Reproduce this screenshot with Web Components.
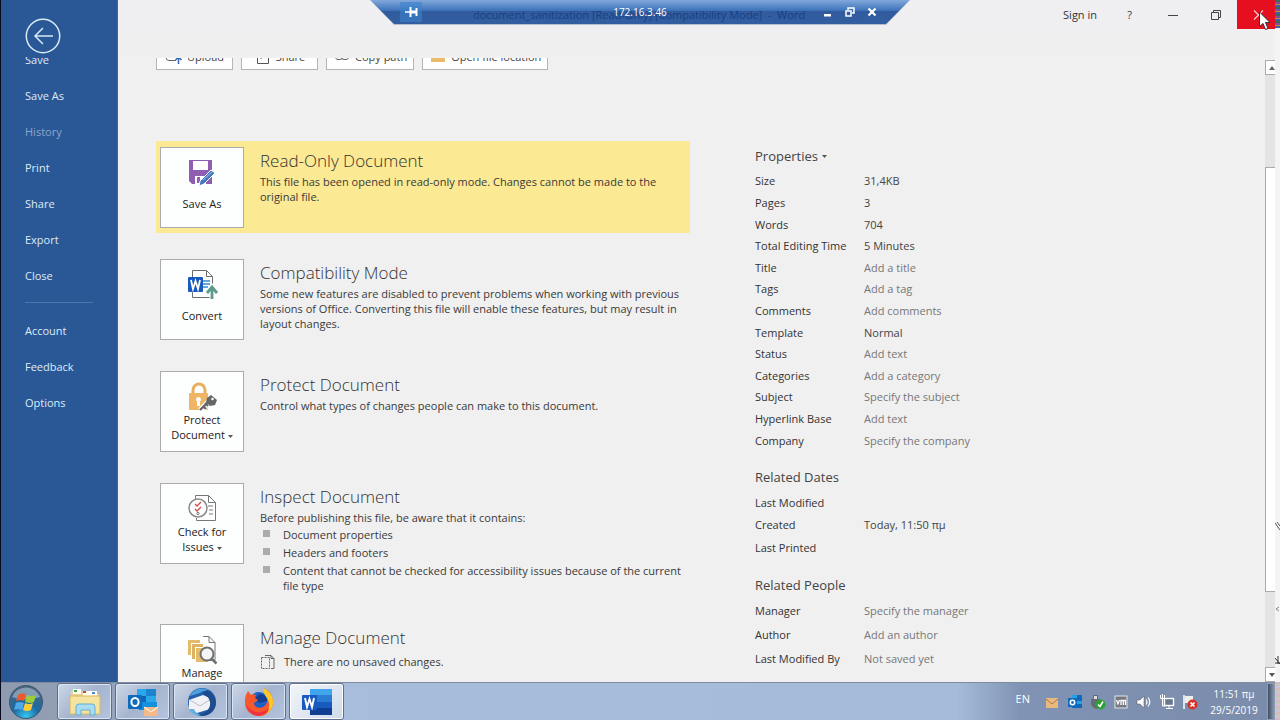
<!DOCTYPE html>
<html lang="en">
<head>
<meta charset="utf-8">
<title>document_sanitization - Word</title>
<style>
html,body{margin:0;height:100%}
body{background:#f0f0f0;color:#333;font:11px/15px "Open Sans","Noto Sans",sans-serif;overflow:hidden}
</style>
</head>
<body>
<app-shell>
  <rdp-bar slot="overlay" address="172.16.3.46"></rdp-bar>
  <backstage-nav slot="nav">
    <nav-item>Save</nav-item>
    <nav-item>Save As</nav-item>
    <nav-item muted>History</nav-item>
    <nav-item>Print</nav-item>
    <nav-item>Share</nav-item>
    <nav-item>Export</nav-item>
    <nav-item>Close</nav-item>
    <nav-item divided>Account</nav-item>
    <nav-item>Feedback</nav-item>
    <nav-item>Options</nav-item>
  </backstage-nav>
  <title-bar slot="title">document_sanitization [Read-Only] [Compatibility Mode]&nbsp; - &nbsp;Word</title-bar>
  <info-page slot="page">
    <path-button slot="actions" icon="upload">Upload</path-button>
    <path-button slot="actions" icon="share">Share</path-button>
    <path-button slot="actions" icon="link">Copy path</path-button>
    <path-button slot="actions" icon="folder">Open file location</path-button>

    <info-card slot="cards" highlight heading="Read-Only Document" icon="save" label="Save As">This file has been opened in read-only mode. Changes cannot be made to the original file.</info-card>
    <info-card slot="cards" heading="Compatibility Mode" icon="convert" label="Convert">Some new features are disabled to prevent problems when working with previous versions of Office. Converting this file will enable these features, but may result in layout changes.</info-card>
    <info-card slot="cards" heading="Protect Document" icon="protect" label="Protect|Document" menu>Control what types of changes people can make to this document.</info-card>
    <info-card slot="cards" heading="Inspect Document" icon="inspect" label="Check for|Issues" menu>Before publishing this file, be aware that it contains:<issue-list items="Document properties|Headers and footers|Content that cannot be checked for accessibility issues because of the current file type"></issue-list></info-card>
    <info-card slot="cards" heading="Manage Document" icon="manage" label="Manage" tall><draft-note>There are no unsaved changes.</draft-note></info-card>

    <prop-group slot="props" heading="Properties" menu rows="Size=31,4KB|Pages=3|Words=704|Total Editing Time=5 Minutes|Title=?Add a title|Tags=?Add a tag|Comments=?Add comments|Template=Normal|Status=?Add text|Categories=?Add a category|Subject=?Specify the subject|Hyperlink Base=?Add text|Company=?Specify the company" style="--rows:281px"></prop-group>
    <prop-group slot="props" heading="Related Dates" rows="Last Modified=|Created=Today, 11:50 πμ|Last Printed=" style="--rows:68px"></prop-group>
    <prop-group slot="props" heading="Related People" rows="Manager=?Specify the manager|Author=?Add an author|Last Modified By=~Not saved yet" style="--rows:71px"></prop-group>
  </info-page>
  <page-scroller slot="scroll"></page-scroller>
  <task-bar slot="tasks">
    <task-button icon="explorer" label="Windows Explorer"></task-button>
    <task-button icon="outlook" label="Outlook"></task-button>
    <task-button icon="thunderbird" label="Thunderbird"></task-button>
    <task-button icon="firefox" label="Firefox"></task-button>
    <task-button icon="word" label="Word" active></task-button>
    <system-tray slot="tray" lang-code="EN" time="11:51 πμ" date="29/5/2019"></system-tray>
  </task-bar>
  <screen-edge slot="edge"></screen-edge>
</app-shell>

<script>
const ICONS = {
  upload:`<svg width="18" height="16" viewBox="0 0 18 16" fill="none" stroke="#666"><path d="M11 12.500H4a3 3 0 0 1 0-6 4.500 4.500 0 0 1 8-1"/><path d="M13.500 16V9m-3 3 3-3 3 3" stroke="#3566b0" stroke-width="1.500"/></svg>`,
  share:`<svg width="18" height="16" viewBox="0 0 18 16" fill="none" stroke="#555"><path d="M7 4.500H3.500v11h11V10"/><path d="M7 11c0-4 2-6 7-6m-3-3 3 3-3 3" stroke="#3566b0"/></svg>`,
  link:`<svg width="18" height="16" viewBox="0 0 18 16" fill="none" stroke="#666"><rect x="2.500" y="6.500" width="7" height="5" rx="2.500"/><rect x="8.500" y="6.500" width="7" height="5" rx="2.500"/></svg>`,
  folder:`<svg width="18" height="16" viewBox="0 0 18 16" fill="#ebbb6c"><path d="M2 3h5l2 2h7v9H2z"/></svg>`,
  save:`<svg width="32" height="30" viewBox="0 0 32 30"><path d="M3 2h23v24H6l-3-3z" fill="#8e5fb0"/><path d="M7 3h15v9H7zM9 18h11v8H9z" fill="#fff"/><path d="M11 19h3v6h-3z" fill="#8e5fb0"/><path d="m14 23 11-11 4 3-11 11-5 2z" fill="#4379c2" stroke="#fff"/><path d="m17 22 9-8" stroke="#9cc0ea"/></svg>`,
  convert:`<svg width="32" height="30" viewBox="0 0 32 30"><path d="M6.500.500h14l6 6v21h-20z" fill="#fff" stroke="#6d6d6d"/><path d="M20.500.500v6h6" fill="none" stroke="#6d6d6d"/><path d="M17 11h7M17 14h7M17 17h5" stroke="#2f8bd0" stroke-width="1.500"/><rect x="2" y="7" width="15" height="15" rx="1" fill="#185abd"/><path d="m5 10 2 9 2.500-8 2.500 8 2-9" fill="none" stroke="#fff" stroke-width="1.800"/><path d="M26 29V18m-5 5 5-6 5 6" stroke="#fff" stroke-width="5" fill="none"/><path d="M26 29V18m-5 5 5-6 5 6" stroke="#5d9a8c" stroke-width="2.800" fill="none"/></svg>`,
  protect:`<svg width="32" height="30" viewBox="0 0 32 30"><path d="M7 12V8a6 6 0 0 1 12 0v4" fill="none" stroke="#e9ae5d" stroke-width="3"/><rect x="3" y="11" width="19" height="17" rx="1" fill="#efb565"/><path d="M12.500 15a2.500 2.500 0 0 1 1.500 4.500V24h-3v-4.500A2.500 2.500 0 0 1 12.500 15z" fill="#fff"/><path d="m14 28 9-9m-6 6 3 3m-1-5 3 2" stroke="#fff" stroke-width="5"/><path d="m14 28 10-10m-7 6 3 3m-1-6 3 3" stroke="#666" stroke-width="2.400"/><path d="m21 16 4-3 6 5-2 5-5 1-4-4z" fill="#666"/><circle cx="26.500" cy="17" r="1.300" fill="#fff"/></svg>`,
  inspect:`<svg width="32" height="30" viewBox="0 0 32 30" fill="none"><path d="M9.500 5V1.500h13l7 7v18h-19V24" fill="#fff" stroke="#777"/><path d="M22.500 1.500v7h7M22 12h5m-4 4h4m-4 4h4" stroke="#777"/><circle cx="12" cy="14" r="9" fill="#fff" stroke="#8a8a8a" stroke-width="1.500"/><path d="m9 10 2 2 4-4m-6 7 2 2 4-4" stroke="#d14b43" stroke-width="1.300"/><circle cx="12" cy="19.500" r="1.200" stroke="#777"/></svg>`,
  manage:`<svg width="32" height="30" viewBox="0 0 32 30" fill="none"><path d="M17 1.500h6l6 6v18H17" fill="#fff" stroke="#777"/><path d="M23 1.500v6h6" stroke="#777"/><path d="M2 5h12v3H5v12H2z" fill="#e3bb6b"/><path d="M6 9h11v3H9v12H6z" fill="#ddb262"/><path d="M10 13h12v14H10z" fill="#e3bb6b"/><circle cx="21" cy="19" r="6.500" fill="#f5f5f5" stroke="#707070" stroke-width="2"/><path d="m25.500 23.500 5 5" stroke="#707070" stroke-width="2.500"/></svg>`,
  draft:`<svg width="16" height="14" viewBox="0 0 16 14" fill="none" stroke="#666"><path d="M5 .500h6l3 3v10h-3M11 .500v3h3"/><path d="M1.500 2.500h8v11h-8z" stroke-dasharray="2 1"/></svg>`,
  explorer:`<svg width="32" height="30" viewBox="0 0 32 30"><path d="M2 4h11l2 3h15v20H2z" fill="#e9d28a"/><path d="M4 2h8v5H4z" fill="#fdfdf5"/><path d="M5 3h3v2H5z" fill="#35a445"/><path d="M14 4h14v6H14z" fill="#fffdf2"/><path d="M14 4h3v2h-3z" fill="#d2473b"/><path d="M23 5h3v2h-3z" fill="#4b88d2"/><path d="M1 9h30v18H1z" fill="#f5e3a0" stroke="#d6b967"/><path d="M7 28V20q0-3 3-3h13q3 0 3 3v8h-5v-5h-9v5z" fill="#a7dcf3" stroke="#66aed2"/></svg>`,
  outlook:`<svg width="32" height="30" viewBox="0 0 32 30"><path d="M10 2h19v20H10z" fill="#1066b5"/><path d="M10 2h9v7h-9zM19 9h10v6H19z" fill="#28a8ea"/><path d="M19 2h10v7H19z" fill="#1a84d0"/><path d="M12 15h18v8H12z" fill="#1490df"/><rect x="1" y="8" width="14" height="14" rx="1" fill="#0f6cbd"/><ellipse cx="8" cy="15" rx="3.600" ry="4" fill="none" stroke="#fff" stroke-width="2"/><path d="M17 20h14v9H17z" fill="#f4b986"/><path d="m17 20 7 5 7-5" fill="none" stroke="#fff"/></svg>`,
  thunderbird:`<svg width="32" height="30" viewBox="0 0 32 30"><circle cx="17" cy="15" r="14" fill="#2560a9"/><path d="M5 9C8 2 18-1 25 4c-5-1-8 0-10 2z" fill="#4da0df"/><path d="M4 13 18 8l9 4-2 10-13 4-8-4z" fill="#f2f2f6"/><path d="m5 13 10 6 11-7" fill="none" stroke="#b7bdca"/><path d="M22 3c9 4 12 15 5 22-4 4-11 5-16 2 9 1 15-5 14-12-1-5-4-7-8-8z" fill="#1d4c8e"/><path d="M4 22c2 5 7 7 12 6-4-1-6-3-7-6z" fill="#62b0e4"/></svg>`,
  firefox:`<svg width="32" height="30" viewBox="0 0 32 30"><circle cx="16" cy="15" r="10" fill="#1d5fc4"/><path d="M17 7c4 0 7 3 7 7l-8 2-4-5z" fill="#173d8f"/><path d="M3 8 5 4l3 4c2-1 5 0 5 0l-1 3 3 2-4 3c0 4 5 6 9 4s6-7 3-13l-3-6c6 2 10 7 10 14 0 8-6 14-14 14S2 23 2 16c0-3 0-5 1-8z" fill="#f4582c"/><path d="M20 1c7 3 10 8 10 14 0 8-6 14-14 14 8-3 11-8 10-13-1-6-6-8-6-15z" fill="#ffc928"/><path d="M3 18c2 8 8 11 13 11 6 0 10-4 10-8-5 5-15 7-23-3z" fill="#f0343f"/></svg>`,
  word:`<svg width="32" height="30" viewBox="0 0 32 30"><path d="M9 2h22v7H9z" fill="#41a5ee"/><path d="M9 8h22v7H9z" fill="#2b7cd3"/><path d="M9 15h22v6H9z" fill="#185abd"/><path d="M9 21h22v7H9z" fill="#103f91"/><rect x="1" y="8" width="15" height="15" rx="1" fill="#185abd"/><path d="m4 11 2 9 2.500-8 2.500 8 2-9" fill="none" stroke="#fff" stroke-width="1.900"/></svg>`,
  orb:`<svg width="36" height="36" viewBox="0 0 36 36"><defs><radialGradient id="g" cx=".5" cy=".95" r=".9"><stop offset="0" stop-color="#37c8ee"/><stop offset=".45" stop-color="#1c6aa2"/><stop offset="1" stop-color="#4b657f"/></radialGradient></defs><circle cx="18" cy="18" r="16.500" fill="url(#g)" stroke="#3e566f"/><path d="M4 13a15 15 0 0 1 28 0q-14 5-28 0z" fill="#b9c8d5" opacity=".55"/><path d="M10 11q4-3 8-1l-2 7q-4-2-8 0z" fill="#ee5a2c"/><path d="M19 11q4 2 9 0l-2 7q-4 2-9 0z" fill="#9ccb3c"/><path d="M8 19q4-2 8 0l-2 7q-4-2-8 0z" fill="#4fa9e8"/><path d="M17 19q4 2 8 0l-2 7q-4 2-8 0z" fill="#fbcc37"/></svg>`,
  mail:`<svg width="16" height="16" viewBox="0 0 16 16"><path d="M2 4h12v10H2z" fill="#e9b980"/><path d="m2 5 6 5 6-5" fill="none" stroke="#a9763f"/></svg>`,
  olk:`<svg width="16" height="16" viewBox="0 0 16 16"><path d="M5 1h10v13H5z" fill="#28a0e4"/><path d="M10 1h5v6h-5zM5 10h10v4H5z" fill="#1268b8"/><rect x="1" y="4" width="9" height="9" fill="#0f6cbd"/><circle cx="5.500" cy="8.500" r="2.200" fill="none" stroke="#fff" stroke-width="1.500"/></svg>`,
  usb:`<svg width="16" height="16" viewBox="0 0 16 16"><path d="M3 1h5v4h2v6q-2 4-4 4-5-2-5-6V5h2z" fill="#656b73"/><path d="M4 2h3v3H4z" fill="#ddd"/><circle cx="10.500" cy="10.500" r="5" fill="#2ba136"/><path d="m8 10.500 2 2 3-5" fill="none" stroke="#fff" stroke-width="1.500"/></svg>`,
  vm:`<svg width="16" height="16" viewBox="0 0 16 16"><rect x="2" y="2" width="12" height="12" fill="#75797f" stroke="#e4e4e4"/><path d="m3.500 6 1.500 4 1.500-4m1.500 5V6.500h4.500V11m-2.200 0V7" fill="none" stroke="#fff" stroke-width="1.300"/></svg>`,
  sound:`<svg width="16" height="16" viewBox="0 0 16 16"><path d="M1 6h3l4-4v12l-4-4H1z" fill="#fff" stroke="#555" stroke-width=".5"/><path d="M10 5.500q2 2.500 0 5m2-7q3.500 4.500 0 9" fill="none" stroke="#fff" stroke-width="1.200"/></svg>`,
  net:`<svg width="16" height="16" viewBox="0 0 16 16" fill="none" stroke="#fff"><rect x="5.500" y="4.500" width="9" height="7" fill="#68778e" stroke-width="1.400"/><path d="M7 14.500h7M10 12v2M1.500 1v3.500h4V1M3.500 0v12H6" /></svg>`,
  flag:`<svg width="16" height="16" viewBox="0 0 16 16"><path d="M2 1v14" stroke="#fff" stroke-width="1.500"/><path d="M3 2h8v7H3z" fill="#eee"/><circle cx="10.500" cy="10.500" r="5" fill="#d6312b"/><path d="m8.500 8.500 4 4m0-4-4 4" stroke="#fff" stroke-width="1.600"/></svg>`
};
const CARET = `<svg width="5" height="3" viewBox="0 0 5 3" aria-hidden="true"><path d="M0 0h5L2.500 3z" fill="#555"/></svg>`;
const RESET = `*{box-sizing:border-box}button{font:inherit;color:inherit;background:none;border:0;padding:0;margin:0}svg{display:block;flex:none}`;

const define = (tag, css, html) => customElements.define(tag, class extends HTMLElement {
  connectedCallback() {
    if (this.shadowRoot) return;
    const root = this.attachShadow({mode: 'open'});
    root.innerHTML = `<style>${RESET}${css}</style>${typeof html === 'function' ? html(this) : html}`;
  }
});

define('app-shell', `
  :host{display:grid;grid-template:1fr 38px / 1px 117px minmax(0,1fr) 5px;height:100vh;position:relative;overflow:hidden}
  .frame{grid-row:1/3;background:#070a1c}
  .nav{grid-area:1/2;display:flex;min-height:0}
  .main{grid-area:1/3;display:flex;flex-direction:column;min-height:0}
  .view{flex:1;display:flex;min-height:0}
  .tasks{grid-area:2/2/3/4;display:flex}
  .edge{grid-area:1/4/3/5;display:flex}
  ::slotted([slot=nav]),::slotted([slot=tasks]),::slotted([slot=edge]),::slotted([slot=page]){flex:1;min-width:0}`,
  `<div class="frame"></div>
   <div class="nav"><slot name="nav"></slot></div>
   <main class="main"><slot name="title"></slot><div class="view"><slot name="page"></slot><slot name="scroll"></slot></div></main>
   <div class="tasks"><slot name="tasks"></slot></div>
   <div class="edge"><slot name="edge"></slot></div>
   <slot name="overlay"></slot>`);

define('rdp-bar', `
  :host{position:absolute;top:0;left:50%;transform:translateX(-50%);width:540px;height:25px;z-index:2;font-size:10px;color:#fff}
  .rim,.bar{clip-path:polygon(0 0,100% 0,calc(100% - 24px) 100%,24px 100%)}
  .rim{background:rgba(120,140,170,.5);height:25px}
  .bar{height:24px;display:grid;grid-template-columns:1fr auto 1fr;align-items:center;
    background:linear-gradient(rgba(125,166,221,.9),rgba(45,104,181,.9) 11px,rgba(8,60,142,.76) 11px,rgba(10,64,146,.76))}
  .pin{margin-left:30px;width:22px;height:20px;display:grid;place-items:center;background:rgba(60,130,205,.6)}
  .ctl{display:flex;justify-content:flex-end;gap:8px;margin-right:31px}
  .ctl button{width:14px;height:14px;display:grid;place-items:center}`,
  el => `<div class="rim"><div class="bar">
    <button class="pin" aria-label="Pin"><svg width="13" height="10" viewBox="0 0 13 10" stroke="#fff" fill="none"><path d="M0 5h5" stroke-width="1.500"/><path d="M5.500 0v10M11.500 1v8" stroke-width="2"/><path d="M5 5h6" stroke-width="3"/></svg></button>
    <span>${el.getAttribute('address')}</span>
    <div class="ctl">
      <button aria-label="Minimize"><svg width="10" height="10" viewBox="0 0 10 10"><path d="M1 7h7v2.500H1z" fill="#fff"/></svg></button>
      <button aria-label="Restore"><svg width="10" height="10" viewBox="0 0 10 10" fill="none" stroke="#fff" stroke-width="1.500"><path d="M3 3V1h6v5H7M1 4h5v5H1z"/></svg></button>
      <button aria-label="Close"><svg width="10" height="10" viewBox="0 0 10 10"><path d="m1.500 1.500 7 7m0-7-7 7" stroke="#fff" stroke-width="2.200"/></svg></button>
    </div></div></div>`);

define('title-bar', `
  :host{display:flex;height:58px;flex:none;align-items:flex-start;color:#333;background:linear-gradient(#efeff3,#f0f0f0)}
  .title{flex:1;text-align:center;padding-left:97px;line-height:29px;white-space:nowrap;color:#000}
  button{height:29px;width:43px;display:grid;place-items:center}
  .sign{width:auto;margin-right:11px;line-height:29px}
  .close{width:38px;background:#e50f20;justify-content:start;position:relative}
  .cursor{position:absolute;left:22px;top:11px}`,
  `<div class="title"><slot></slot></div>
   <button class="sign">Sign in</button>
   <button aria-label="Help"><span>?</span></button>
   <button aria-label="Minimize"><svg width="10" height="10" viewBox="0 0 10 10"><path d="M0 5.500h10" stroke="#444"/></svg></button>
   <button aria-label="Restore"><svg width="10" height="10" viewBox="0 0 10 10" fill="none" stroke="#444"><path d="M2.500 2V.500h7v7H8M.500 2.500h7v7h-7z"/></svg></button>
   <button class="close" aria-label="Close"><svg width="43" height="10" viewBox="0 0 43 10"><path d="m17 .500 9 9m0-9-9 9" stroke="#ffc5c9" stroke-width="1.200"/></svg>
   <svg class="cursor" width="13" height="20" viewBox="0 0 13 20"><path d="M.500 1v14.500l3.500-3 2.500 6 2.500-1-2.500-6h4.500z" fill="#fff" stroke="#333"/></svg></button>`);

define('backstage-nav', `
  :host{display:flex;flex-direction:column;background:#2a5796;border-right:1px solid #3c67a3;color:#dcecf8;min-height:0}
  header{height:57px;flex:none;padding:18px 0 0 24px}
  nav{flex:1;overflow:hidden}
  .list{margin-top:-15px}`,
  `<header><button aria-label="Back"><svg width="36" height="36" viewBox="0 0 36 36" fill="none" stroke="#d7eaf6" stroke-width="1.500"><circle cx="18" cy="18" r="16.700"/><path d="M28 18H10m8-8-8 8 8 8"/></svg></button></header>
   <nav><div class="list"><slot></slot></div></nav>`);

define('nav-item', `
  :host{display:block}
  :host([muted]){color:#8aa6cd}
  :host([divided])::before{content:"";display:block;height:1px;margin:8px 24px 10px;background:#4c76b1}
  a{display:block;padding-left:24px;line-height:36px;color:inherit;text-decoration:none}`,
  `<a href="#"><slot></slot></a>`);

define('info-page', `
  :host{display:block;overflow:hidden;min-height:0}
  .inner{margin-top:-12px;padding-left:38px}
  .actions{display:flex;gap:8px;margin-bottom:71px}
  .cols{display:flex;gap:65px;align-items:flex-start}
  .cards{flex:0 1 534px;display:flex;flex-direction:column;gap:20px}
  .props{flex:1;padding-top:5px;display:flex;flex-direction:column;gap:16px}`,
  `<div class="inner"><div class="actions"><slot name="actions"></slot></div>
   <div class="cols"><div class="cards"><slot name="cards"></slot></div><div class="props"><slot name="props"></slot></div></div></div>`);

define('path-button', `
  :host{display:block}
  button{height:24px;min-width:77px;display:flex;align-items:center;justify-content:center;gap:4px;padding:0 6px 4px 6px;background:#fff;border:1px solid #b5b5b5;white-space:nowrap;color:#444}`,
  el => `<button>${ICONS[el.getAttribute('icon')]}<slot></slot></button>`);

define('info-card', `
  :host{display:flex;gap:16px;align-items:flex-start;padding:6px 4px 5px}
  :host([highlight]){background:#fbe993}
  .tile{flex:none;width:84px;height:81px;display:flex;flex-direction:column;align-items:center;padding-top:10px;background:#fdfefe;border:1px solid #ababab;color:#222;text-align:center}
  .label{padding-top:8px}
  :host([menu]) .label,:host([tall]) .label{padding-top:0}
  .label svg{display:inline-block;vertical-align:middle;margin-left:3px}
  .text{width:424px;padding-top:2px;color:#3a3a3a}
  h2{margin:0 0 1px;font-weight:300;font-size:17px;line-height:24px;color:#333}`,
  el => {
    const lines = el.getAttribute('label').split('|').join('<br>');
    return `<button class="tile">${ICONS[el.getAttribute('icon')]}<span class="label">${lines}${el.hasAttribute('menu') ? CARET : ''}</span></button>
    <div class="text"><h2>${el.getAttribute('heading')}</h2><slot></slot></div>`;
  });

define('issue-list', `
  :host{display:block}
  ul{list-style:none;margin:0;padding:2px 0 0;display:flex;flex-direction:column;gap:3px}
  li{display:flex;align-items:flex-start;gap:13px}
  li::before{content:"";flex:none;width:7px;height:7px;margin:3px 0 0 3px;background:#ababab}`,
  el => `<ul>${el.getAttribute('items').split('|').map(t => `<li><span>${t}</span></li>`).join('')}</ul>`);

define('draft-note', `:host{display:flex;gap:8px;align-items:center;padding-top:3px}`, `${ICONS.draft}<span><slot></slot></span>`);

define('prop-group', `
  :host{display:block}
  h3{margin:0 0 4px;font-weight:400;font-size:13px;line-height:20px;color:#444;display:flex;align-items:center}
  h3 button{display:flex;align-items:center;gap:4px}
  table{border-collapse:collapse;height:var(--rows);width:320px;table-layout:fixed}
  th{width:109px;font-weight:400;text-align:left;color:#333;white-space:nowrap}
  th,td{padding:0;vertical-align:middle;line-height:15px}
  td{color:#444}
  .dim{color:#777}
  input{display:block;width:100%;height:15px;padding:0;border:0;background:none;font:inherit;color:#444;outline:0}
  input::placeholder{color:#777;opacity:1}`,
  el => {
    const name = el.getAttribute('heading');
    const rows = el.getAttribute('rows').split('|').map((r, i) => {
      const [k, v] = r.split('=');
      const id = name.replace(/\W/g, '') + i;
      if (v[0] === '?') return `<tr><th scope="row"><label for="${id}">${k}</label></th><td><input id="${id}" type="text" placeholder="${v.slice(1)}"></td></tr>`;
      if (v[0] === '~') return `<tr><th scope="row">${k}</th><td class="dim">${v.slice(1)}</td></tr>`;
      return `<tr><th scope="row">${k}</th><td>${v}</td></tr>`;
    }).join('');
    return `<h3>${el.hasAttribute('menu') ? `<button>${name}${CARET}</button>` : name}</h3><table>${rows}</table>`;
  });

define('page-scroller', `
  :host{display:flex;flex-direction:column;width:10px;padding-top:2px}
  button{height:15px;background:#fff;border:1px solid #aaa;border-right:0;display:grid;place-items:center;padding-left:2px}
  .track{flex:1;display:grid;grid-template-rows:92fr 425fr 75fr;background:#e4e4e4}
  .thumb{grid-row:2;background:#fff;border:1px solid #aaa;border-right:0}`,
  `<button aria-label="Scroll up"><svg width="6" height="4" viewBox="0 0 6 4"><path d="M0 4h6L3 0z" fill="#666"/></svg></button>
   <div class="track"><div class="thumb"></div></div>
   <button aria-label="Scroll down"><svg width="6" height="4" viewBox="0 0 6 4"><path d="M0 0h6L3 4z" fill="#555"/></svg></button>`);

define('task-bar', `
  :host{display:flex;align-items:stretch;border-top:1px solid #7f8ba0;background:linear-gradient(90deg,#8e9aae,#9aabc6 200px,#a8bddb 345px,#a6bbda 75%,#8093b4 80%,#7b8cab)}
  .start{width:50px;margin-right:6px;display:grid;place-items:center}
  .apps{display:flex;gap:3px;flex:1}`,
  `<button class="start" aria-label="Start">${ICONS.orb}</button><div class="apps"><slot></slot></div><slot name="tray"></slot>`);

define('task-button', `
  :host{display:flex;width:55px}
  button{flex:1;display:grid;place-items:center;border:1px solid #5f6f8b;border-radius:3px;background:linear-gradient(135deg,#cdd7e6,#a5b4cf 50%,#b5c4de);box-shadow:inset 0 0 0 1px #dbe4f1}
  :host([active]) button{background:linear-gradient(135deg,#f2f5fa,#cfdaea);box-shadow:inset 0 0 0 1px #fff}`,
  el => `<button aria-label="${el.getAttribute('label')}">${ICONS[el.getAttribute('icon')]}</button>`);

define('system-tray', `
  :host{display:flex;align-items:center;color:#fff}
  .lang{margin:0 14px 6px 0}
  .icons{display:flex;gap:7px}
  .clock{width:69px;padding-left:3px;line-height:16px;text-align:center;font-size:10px}
  .desk{align-self:stretch;width:8px;border:1px solid #8e9cb4;border-right:0;background:linear-gradient(90deg,#3f4d66,#93a1b8)}`,
  el => `<button class="lang">${el.getAttribute('lang-code')}</button>
   <div class="icons">${['mail','olk','usb','vm','sound','net','flag'].map(n => `<button aria-label="${n}">${ICONS[n]}</button>`).join('')}</div>
   <button class="clock">${el.getAttribute('time')}<br>${el.getAttribute('date')}</button>
   <button class="desk" aria-label="Show desktop"></button>`);

define('screen-edge', `
  :host{display:flex;flex-direction:column;background:#f4f4f4}
  .top{height:28px;background:repeating-linear-gradient(#3a6a58 0 2px,#8a4a9a 2px 4px,#c08a3c 4px 5px,#3c5ea8 5px 7px)}
  .mid{flex:1;display:flex;flex-direction:column;justify-content:flex-end;padding-bottom:16px;gap:42px}
  .foot{height:38px;background:repeating-linear-gradient(#d9b8c4 0 2px,#c3cdb6 2px 4px,#cfc3dc 4px 6px)}`,
  `<div class="top"></div>
   <div class="mid"><svg width="5" height="10" viewBox="0 0 5 10"><path d="m0 1 5 7M2 0l3 4" stroke="#555"/></svg>
   <svg width="5" height="40" viewBox="0 0 5 40"><path d="M4 33 1 35l3 2" fill="none" stroke="#888"/></svg>
   <svg width="5" height="10" viewBox="0 0 5 10"><path d="m0 2 5 6M3 0v8M0 7h5" stroke="#333"/></svg></div>
   <div class="foot"></div>`);
</script>
</body>
</html>
